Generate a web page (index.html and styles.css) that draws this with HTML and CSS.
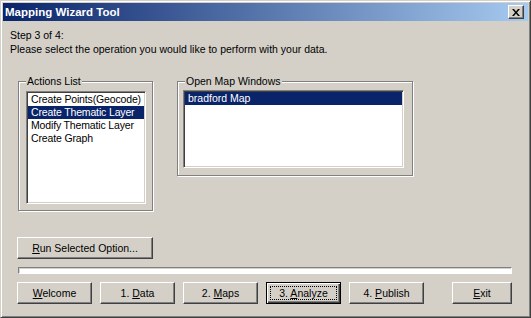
FILE: index.html
```html
<!DOCTYPE html>
<html lang="en">
<head>
  <meta charset="UTF-8" />
  <title>Mapping Wizard Tool</title>
  <link rel="stylesheet" href="styles.css">
</head>
<body>
  <div class="window">
    <div class="titlebar">
      <span class="title">Mapping Wizard Tool</span>
      <button class="close" aria-label="Close">
        <svg width="8" height="7" viewBox="0 0 8 7">
          <path d="M0 0h2l2 2.5L6 0h2L5 3.5 8 7H6L4 4.5 2 7H0l3-3.5z" fill="#000"/>
        </svg>
      </button>
    </div>

    <div class="content">
      <div class="intro">
        <div>Step 3 of 4:</div>
        <div>Please select the operation you would like to perform with your data.</div>
      </div>

      <div class="groups">
        <div class="group actions">
          <span class="legend">Actions List</span>
          <ul class="listbox">
            <li>Create Points(Geocode)</li>
            <li class="selected">Create Thematic Layer</li>
            <li>Modify Thematic Layer</li>
            <li>Create Graph</li>
          </ul>
        </div>
        <div class="group maps">
          <span class="legend">Open Map Windows</span>
          <ul class="listbox">
            <li class="selected">bradford Map</li>
          </ul>
        </div>
      </div>

      <button class="btn run"><u>R</u>un Selected Option...</button>

      <div class="progress"></div>

      <div class="nav">
        <button class="btn"><u>W</u>elcome</button>
        <button class="btn">1. <u>D</u>ata</button>
        <button class="btn">2. <u>M</u>aps</button>
        <button class="btn default">3. <u>A</u>nalyze</button>
        <button class="btn">4. <u>P</u>ublish</button>
        <button class="btn exit"><u>E</u>xit</button>
      </div>
    </div>
  </div>
</body>
</html>
```

FILE: styles.css
```css
:root {
  --face: #d4d0c8;
  --shadow: #808080;
  --dark: #404040;
  --light: #ffffff;
  --select: #0a246a;
}

* {
  box-sizing: border-box;
}

body {
  margin: 0;
  font-family: 'Liberation Sans', Arial, sans-serif;
  font-size: 10.5px;
  color: #000;
  background: var(--face);
}

.window {
  width: 531px;
  height: 318px;
  padding: 2px;
  background: var(--face);
  border: 1px solid;
  border-color: var(--face) var(--dark) var(--dark) var(--face);
  box-shadow: inset 1px 1px 0 var(--light), inset -1px -1px 0 var(--shadow);
}

.titlebar {
  height: 18px;
  display: flex;
  align-items: center;
  justify-content: space-between;
  padding: 0 2px;
  background: linear-gradient(to right, #0a246a, #a6caf0);
}

.title {
  color: #fff;
  font-weight: bold;
  font-size: 11.5px;
}

.close {
  width: 16px;
  height: 14px;
  padding: 0;
  margin-right: 2px;
  display: flex;
  align-items: center;
  justify-content: center;
  background: var(--face);
  border: 1px solid;
  border-color: var(--light) var(--dark) var(--dark) var(--light);
  box-shadow: inset -1px -1px 0 var(--shadow);
}

.content {
  padding: 7px 16px 0 7px;
}

.intro {
  line-height: 14px;
}

.groups {
  display: flex;
  align-items: flex-start;
  margin: 25px 0 0 8px;
}

.group {
  position: relative;
  border: 1px solid var(--shadow);
  box-shadow: inset 1px 1px 0 var(--light), 1px 1px 0 var(--light);
}

.legend {
  position: absolute;
  top: -7px;
  left: 7px;
  padding: 0 1px;
  line-height: 13px;
  background: var(--face);
}

.actions {
  width: 135px;
  height: 130px;
  padding: 9px 0 0 7px;
}

.maps {
  width: 236px;
  height: 95px;
  margin-left: 24px;
  padding: 8px 0 0 5px;
}

.listbox {
  list-style: none;
  margin: 0;
  padding: 1px 0;
  background: #fff;
  border: 1px solid;
  border-color: var(--shadow) var(--light) var(--light) var(--shadow);
  box-shadow: inset 1px 1px 0 var(--dark), inset -1px -1px 0 var(--face);
}

.listbox li {
  height: 13px;
  line-height: 13px;
  padding-left: 3px;
  margin: 0 1px;
  white-space: nowrap;
  overflow: hidden;
}

.listbox li.selected {
  background: var(--select);
  color: #fff;
}

.actions .listbox {
  width: 120px;
  height: 113px;
}

.actions .listbox li {
  letter-spacing: -0.15px;
}

.maps .listbox {
  width: 221px;
  height: 78px;
}

.btn {
  position: relative;
  height: 22px;
  padding: 0;
  font-family: inherit;
  font-size: 10.5px;
  color: #000;
  background: var(--face);
  border: 1px solid;
  border-color: var(--light) var(--dark) var(--dark) var(--light);
  box-shadow: inset -1px -1px 0 var(--shadow);
}

.run {
  width: 136px;
  margin: 26px 0 0 7px;
}

.progress {
  height: 7px;
  margin: 8px 0 0 8px;
  background: #fff;
  border: 1px solid;
  border-color: var(--shadow) var(--light) var(--light) var(--shadow);
  box-shadow: inset 1px 1px 0 var(--face);
}

.nav {
  display: flex;
  gap: 8px;
  margin: 8px 0 0 7px;
}

.nav .btn {
  width: 75px;
}

.nav .exit {
  width: 60px;
  margin-left: auto;
}

.btn.default {
  border: 1px solid #000;
  box-shadow: inset 1px 1px 0 var(--light), inset -1px -1px 0 var(--dark), inset -2px -2px 0 var(--shadow);
}

.btn.default::after {
  content: "";
  position: absolute;
  inset: 3px;
  border: 1px dotted #000;
}
```
